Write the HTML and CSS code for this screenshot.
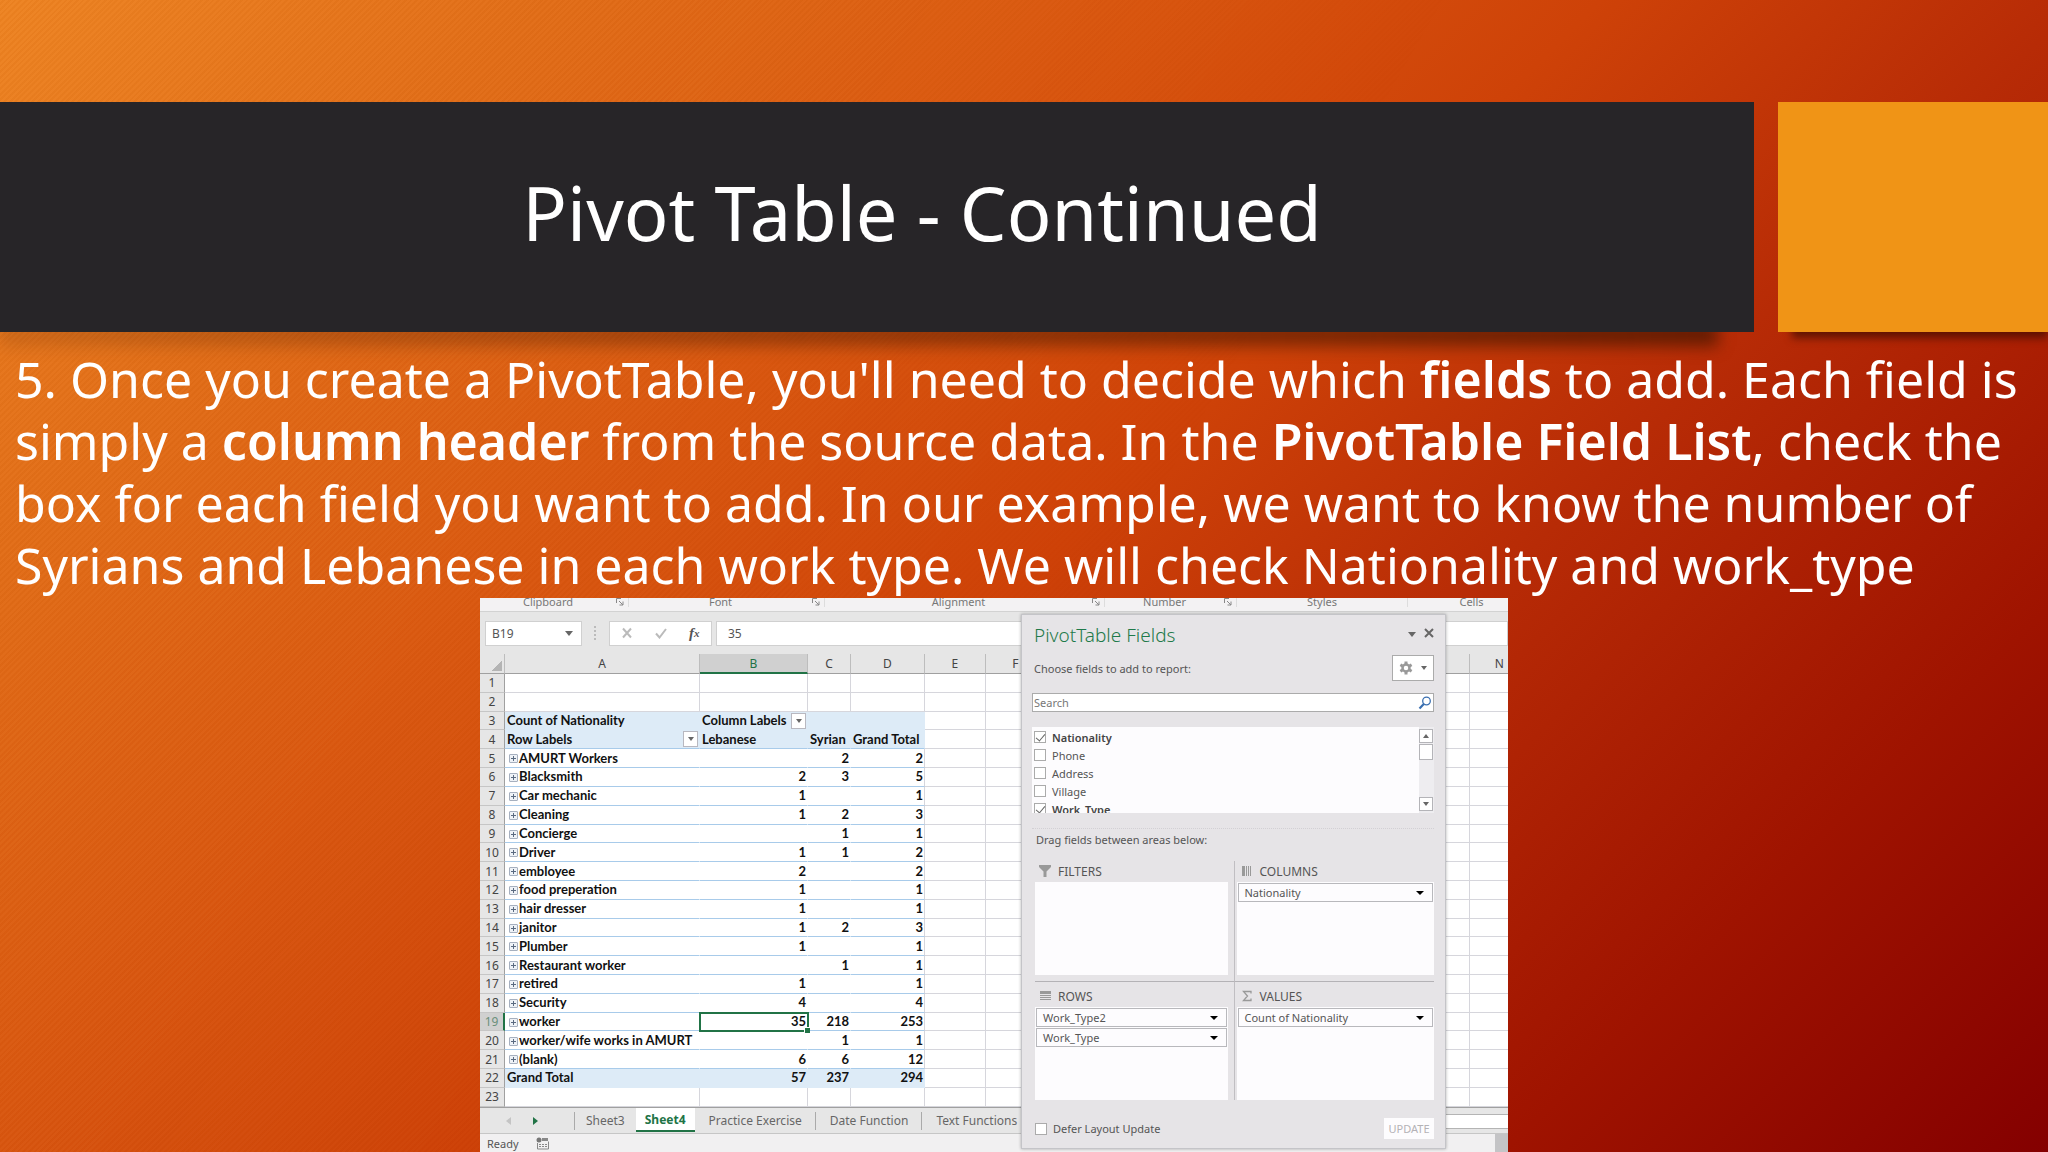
FILE: index.html
```html
<!DOCTYPE html>
<html lang="en">
<head>
    <meta charset="UTF-8">
    <title>Pivot Table - Continued</title>
    <link rel="stylesheet" href="styles.css">
</head>
<body>
<div class="slide">
    <header class="banner">
        <div class="banner-title"><h1>Pivot Table - Continued</h1></div>
        <div class="banner-accent"></div>
    </header>
    <p class="text">5. Once you create a PivotTable, you'll need to decide which <b>fields</b> to add. Each field is simply a <b>column header</b> from the source data. In the <b>PivotTable Field List</b>, check the box for each field you want to add. In our example, we want to know the number of Syrians and Lebanese in each work type. We will check Nationality and work_type</p>

    <div class="excel">
        <div class="ribbon">
            <div class="group"><span>Clipboard</span><svg class="launcher" viewBox="0 0 8 8"><path d="M.5 5V.5H5M3 3l4 4M7 3.500V7H3.500"/></svg></div>
            <div class="group"><span>Font</span><svg class="launcher" viewBox="0 0 8 8"><path d="M.5 5V.5H5M3 3l4 4M7 3.500V7H3.500"/></svg></div>
            <div class="group"><span>Alignment</span><svg class="launcher" viewBox="0 0 8 8"><path d="M.5 5V.5H5M3 3l4 4M7 3.500V7H3.500"/></svg></div>
            <div class="group"><span>Number</span><svg class="launcher" viewBox="0 0 8 8"><path d="M.5 5V.5H5M3 3l4 4M7 3.500V7H3.500"/></svg></div>
            <div class="group"><span>Styles</span></div>
            <div class="group"><span>Cells</span></div>
        </div>

        <div class="formula-bar">
            <div class="name-box">
                <input type="text" value="B19" aria-label="Name box">
                <button type="button" aria-label="Cell names"><i class="arrow"></i></button>
            </div>
            <svg class="grip" viewBox="0 0 3 14"><path d="M0 0h2v2H0zM0 4h2v2H0zM0 8h2v2H0zM0 12h2v2H0z"/></svg>
            <div class="fx">
                <button type="button" aria-label="Cancel"><svg viewBox="0 0 12 12"><path d="M2 1.500l8 9M10 1.500l-8 9"/></svg></button>
                <button type="button" aria-label="Enter"><svg viewBox="0 0 12 12"><path d="M1 6.500l3.500 4L11 2"/></svg></button>
                <button type="button" class="fn" aria-label="Insert function">f<sub>x</sub></button>
            </div>
            <input class="formula" type="text" value="35" aria-label="Formula">
        </div>

        <table class="sheet">
            <colgroup>
                <col class="c-num"><col class="c-a"><col class="c-b"><col class="c-c"><col class="c-d">
                <col span="10">
            </colgroup>
            <thead><tr id="letters"></tr></thead>
            <tbody id="rows"></tbody>
        </table>

        <div class="tabs">
            <div class="tabs-nav">
                <button type="button" aria-label="Previous sheet"><i class="prev"></i></button>
                <button type="button" aria-label="Next sheet"><i class="next"></i></button>
            </div>
            <button type="button" class="tab">Sheet3</button>
            <button type="button" class="tab current">Sheet4</button>
            <button type="button" class="tab">Practice Exercise</button>
            <button type="button" class="tab">Date Function</button>
            <button type="button" class="tab">Text Functions</button>
            <div class="hscroll"></div>
        </div>
        <div class="status">
            <span>Ready</span>
            <svg viewBox="0 0 13 13"><circle cx="3" cy="3" r="2.500" fill="#777"/><path d="M6 1h6v3H6z" fill="#888"/><path d="M1.500 6v6h11V4.500" fill="none" stroke="#888"/><path d="M3 7h2v1H3zM6 7h2v1H6zM9 7h2v1H9zM3 9h2v1H3zM6 9h2v1H6zM9 9h2v1H9z" fill="#888"/></svg>
            <div class="status-end"></div>
        </div>

        <aside class="panel">
            <div class="panel-head">
                <h2>PivotTable Fields</h2>
                <button type="button" aria-label="Task pane options"><i class="arrow big"></i></button>
                <button type="button" aria-label="Close"><svg viewBox="0 0 10 10"><path d="M1 1l8 8M9 1L1 9"/></svg></button>
            </div>
            <div class="choose">
                <span>Choose fields to add to report:</span>
                <button type="button" aria-label="Tools">
                    <svg viewBox="0 0 14 14"><circle cx="7" cy="7" r="3.500" fill="none" stroke="#999" stroke-width="2.500"/><path d="M7 .5v2.500M7 11v2.500M1.400 3.800l2.100 1.200M10.500 9l2.100 1.200M1.400 10.200L3.500 9M10.500 5l2.100-1.200" stroke="#999" stroke-width="3"/></svg>
                    <i class="arrow"></i>
                </button>
            </div>
            <div class="search">
                <input type="text" placeholder="Search" aria-label="Search">
                <svg viewBox="0 0 14 14"><circle cx="8.500" cy="5" r="3.800"/><path d="M5.800 8L1.500 12.500" stroke-width="2.200"/></svg>
            </div>
            <div class="fields">
                <div class="fields-list">
                    <label class="on"><input type="checkbox" checked>Nationality</label>
                    <label><input type="checkbox">Phone</label>
                    <label><input type="checkbox">Address</label>
                    <label><input type="checkbox">Village</label>
                    <label class="on"><input type="checkbox" checked>Work_Type</label>
                </div>
                <div class="vscroll">
                    <button type="button" aria-label="Scroll up"><i class="arrow up"></i></button>
                    <div class="thumb"></div>
                    <button type="button" class="down" aria-label="Scroll down"><i class="arrow"></i></button>
                </div>
            </div>
            <p class="drag">Drag fields between areas below:</p>
            <div class="areas">
                <section class="area">
                    <h3><svg viewBox="0 0 12 12"><path d="M0 0h12v2L7.500 6.500V12h-3V6.500L0 2z"/></svg>FILTERS</h3>
                    <div class="drop"></div>
                </section>
                <section class="area">
                    <h3><svg viewBox="0 0 12 12"><path d="M1 1h3v10H1zM5 1h1v10H5zM7 1h1v10H7zM9 1h1v10H9z"/></svg>COLUMNS</h3>
                    <div class="drop">
                        <button type="button">Nationality<i class="arrow black"></i></button>
                    </div>
                </section>
                <section class="area">
                    <h3><svg viewBox="0 0 12 12"><path d="M1 1h11v3H1zM1 5h11v1H1zM1 7h11v1H1zM1 9h11v1H1z"/></svg>ROWS</h3>
                    <div class="drop">
                        <button type="button">Work_Type2<i class="arrow black"></i></button>
                        <button type="button">Work_Type<i class="arrow black"></i></button>
                    </div>
                </section>
                <section class="area">
                    <h3><svg viewBox="0 0 12 12"><path d="M10 3.500V1.500H2.500L6.500 6l-4 4.500H10v-2" fill="none" stroke="#999" stroke-width="1.300"/></svg>VALUES</h3>
                    <div class="drop">
                        <button type="button">Count of Nationality<i class="arrow black"></i></button>
                    </div>
                </section>
            </div>
            <div class="panel-foot">
                <label><input type="checkbox">Defer Layout Update</label>
                <button type="button" disabled>UPDATE</button>
            </div>
        </aside>
    </div>
</div>
<script src="script.js"></script>
</body>
</html>
```
FILE: styles.css
```css
*{margin: 0; padding: 0; box-sizing: border-box;}
body {
    font-family: "Noto Sans", "Open Sans", sans-serif;
    color: #fff;
}
button, input {
    font: inherit;
    color: inherit;
    border: 0;
    border-radius: 0;
    background: none;
}
svg {display: block;}

/* slide */
.slide {
    position: relative;
    z-index: 0;
    height: 100vh;
    padding-top: 102px;
    overflow: hidden;
    background: linear-gradient(135deg, #ee8422 0%, #e26d17 18%, #da5810 34%, #ce4208 50%, #b72b06 65%, #9f1300 83%, #840000 100%);
}
.slide::before {
    content: "";
    position: absolute;
    inset: 0;
    z-index: -2;
    background: repeating-linear-gradient(135deg, rgba(255,255,255,.02) 0 2px, rgba(120,40,0,.03) 2px 4px);
    -webkit-mask-image: linear-gradient(120deg, #000 25%, transparent 55%);
    mask-image: linear-gradient(120deg, #000 25%, transparent 55%);
}
.banner {
    display: grid;
    grid-template-columns: 1754fr 270fr;
    column-gap: 24px;
    min-height: 230px;
}
.banner-title, .banner-accent {position: relative;}
.banner-title {
    display: flex;
    align-items: center;
    justify-content: center;
    padding: 0 0 8px 90px;
    background: #272528;
}
.banner-accent {background: #f09416;}
/* shadows under the two blocks */
.banner-title::after, .banner-accent::after {
    content: "";
    position: absolute;
    z-index: -1;
    left: 0;
    right: 36px;
    bottom: -14px;
    height: 24px;
    background: linear-gradient(90deg, rgba(60,20,0,.15), rgba(60,20,0,.7));
    filter: blur(8px);
}
.banner-accent::after {
    left: 14px;
    right: 0;
    bottom: -6px;
    background: rgba(60,10,0,.7);
    filter: blur(4px);
}
h1 {
    font-size: 74px;
    font-weight: 400;
    line-height: 1;
}
.text {
    padding: 16px 0 2px 15px;
    font-size: 50px;
    line-height: 62px;
}
.text b {font-weight: 600;}

/* excel window */
.excel {
    position: relative;
    margin: 0 540px 0 480px;
    overflow: hidden;
    background: #e6e6e6;
    color: #555;
    font-size: 12px;
}
.ribbon {
    display: grid;
    grid-template-columns: 149px 196px 280px 132px 171px 128px;
    height: 14px;
    background: #f3f2f3;
    border-bottom: 1px solid #d2d2d2;
    font-size: 11px;
    line-height: 8px;
    color: #777;
}
.group {
    display: flex;
    border-right: 1px solid #ddd;
    height: 9px;
}
.group span {
    flex: 1;
    text-align: center;
}
.launcher {
    width: 8px;
    height: 8px;
    margin-right: 4px;
    fill: none;
    stroke: #888;
}
.arrow {
    display: inline-block;
    border: 3px solid transparent;
    border-top: 4px solid #666;
    border-bottom: 0;
}
.arrow.big {border-width: 5px 4px 0;}
.arrow.black {border-top-color: #000; border-width: 4px 4px 0;}
.arrow.up {transform: rotate(180deg);}
.formula-bar {
    display: flex;
    align-items: center;
    height: 42px;
    padding-left: 5px;
}
.name-box, .fx, .formula {
    height: 25px;
    background: #fff;
    border: 1px solid #d0d0d0;
}
.name-box {
    display: flex;
    width: 97px;
}
.name-box input {
    width: 70px;
    padding-left: 6px;
}
.name-box button {
    flex: 1;
    display: flex;
    align-items: center;
    justify-content: center;
}
.name-box .arrow {border-width: 5px 4px 0;}
.grip {
    width: 3px;
    height: 14px;
    margin: 0 12px;
    fill: #bbb;
}
.fx {
    display: flex;
    width: 103px;
}
.fx button {
    flex: 1;
    display: flex;
    align-items: center;
    justify-content: center;
}
.fx svg {
    width: 12px;
    height: 12px;
    fill: none;
    stroke: #bbb;
    stroke-width: 2;
}
.fx .fn {
    font: italic bold 15px/15px "Liberation Serif", serif;
    color: #555;
}
.fn sub {font-size: 11px;}
.formula {
    flex: 1;
    margin-left: 4px;
    padding-left: 11px;
}

/* sheet */
.sheet {
    width: 1050px;
    height: 453px;
    table-layout: fixed;
    border-collapse: separate;
    border-spacing: 0;
    background: #fff;
    font-size: 13px;
    line-height: 17px;
    color: #111;
}
.c-num {width: 25px;}
.c-a {width: 195px;}
.c-b {width: 108px;}
.c-c {width: 43px;}
.c-d {width: 74px;}
.sheet th {
    background: #e6e6e6;
    border-right: 1px solid #bdbdbd;
    border-bottom: 1px solid #a0a0a0;
    font-weight: 400;
    font-size: 12px;
    color: #444;
}
.sheet thead th {height: 20px;}
.sheet tbody th {
    border-right-color: #a0a0a0;
    border-bottom-color: #c6c6c6;
}
.sheet thead th.active {
    background: #d0d0d0;
    border-bottom: 2px solid #217346;
    color: #217346;
}
.sheet tbody th.active {
    background: #d0d0d0;
    border-right: 2px solid #217346;
    color: #6a8f7b;
}
.corner i {
    display: block;
    margin: 4px 2px 0 auto;
    width: 10px;
    height: 10px;
    background: linear-gradient(135deg, transparent 50%, #b4b4b4 50%);
}
.sheet td {
    border-right: 1px solid #d6d6dc;
    border-bottom: 1px solid #d6d6dc;
    white-space: nowrap;
}
.sheet .pv {
    padding: 0 2px;
    border-right-color: transparent;
    border-bottom-color: #a8cbea;
    font-family: Lato, sans-serif;
    font-weight: 700;
}
.sheet .pv.last {border-right-color: #d6d6dc;}
.sheet .pv.num {text-align: right; padding-right: 1px;}
.sheet .blue {
    background: #ddebf7;
    border-color: #ddebf7;
}
.sheet .blue.line {border-bottom-color: #a8cbea;}
.cell {
    display: flex;
    align-items: center;
    justify-content: space-between;
}
.filter {
    display: flex;
    align-items: center;
    justify-content: center;
    width: 15px;
    height: 16px;
    margin-right: -1px;
    background: #fff;
    border: 1px solid #b8b8c0;
}
.plus {
    display: inline-block;
    width: 9px;
    height: 9px;
    margin: 0 1px 1px 2px;
    vertical-align: middle;
    border: 1px solid #a6b0bf;
    border-radius: 1px;
    background:
        linear-gradient(#5a6a80, #5a6a80) center / 5px 1px no-repeat,
        linear-gradient(#5a6a80, #5a6a80) center / 1px 5px no-repeat,
        #eef2f7;
}
.sheet .selected {
    position: relative;
    outline: 2px solid #217346;
    outline-offset: -1px;
}
.selected::after {
    content: "";
    position: absolute;
    right: -3px;
    bottom: -3px;
    width: 5px;
    height: 5px;
    background: #217346;
    border: solid #fff;
    border-width: 1px 0 0 1px;
}

/* sheet tabs */
.tabs {
    display: flex;
    height: 27px;
    border-top: 1px solid #a0a0a0;
    border-bottom: 1px solid #c6c6c6;
    white-space: nowrap;
}
.tabs-nav {
    display: flex;
    align-items: center;
    gap: 22px;
    width: 95px;
    padding-left: 26px;
}
.tabs-nav i {
    display: block;
    border: 4px solid transparent;
}
.tabs-nav .prev {border-right: 5px solid #c4c4c4; border-left: 0;}
.tabs-nav .next {border-left: 5px solid #217346; border-right: 0;}
.tab {
    position: relative;
    height: 24px;
    padding: 0 14px;
    color: #666;
}
.tab::after, .tabs-nav + .tab::before {
    content: "";
    position: absolute;
    top: 4px;
    right: 0;
    height: 18px;
    border-right: 1px solid #aaa;
}
.tabs-nav + .tab {padding: 0 11px;}
.tabs-nav + .tab::before {right: 100%;}
.tabs-nav + .tab::after, .tab.current::after {display: none;}
.tab.current {
    background: #fff;
    border-bottom: 2px solid #217346;
    font-weight: 700;
    padding: 0 9px;
    color: #217346;
}
.hscroll {
    flex: 1;
    height: 15px;
    margin: 6px 0 0 20px;
    background: #fff;
    border: 1px solid #b4b4b4;
    border-right: 0;
}
.status {
    display: flex;
    align-items: center;
    gap: 17px;
    height: 18px;
    padding-left: 7px;
    background: #f1f0f1;
    font-size: 11px;
}
.status svg {width: 13px; height: 13px;}
.status-end {
    width: 13px;
    height: 18px;
    margin-left: auto;
    background: #c4c4c6;
}

/* field list panel, floats over the sheet */
.panel {
    position: absolute;
    top: 16px;
    left: 541px;
    width: 425px;
    padding: 0 11px 9px 10px;
    background: #e6e4e7;
    border: 1px solid #c4c4c8;
    box-shadow: 0 0 3px rgba(0,0,0,.3);
    font-size: 11px;
    color: #555;
}
.panel-head {
    display: flex;
    align-items: center;
    gap: 8px;
    height: 40px;
    padding-left: 2px;
}
.panel-head h2 {
    flex: 1;
    font-size: 19px;
    font-weight: 300;
    color: #1f7a4a;
}
.panel-head button {line-height: 8px; margin-bottom: 4px;}
.panel-head svg {
    width: 10px;
    height: 10px;
    stroke: #666;
    stroke-width: 2;
}
.choose {
    display: flex;
    align-items: center;
    justify-content: space-between;
    padding-left: 2px;
}
.choose button {
    display: flex;
    align-items: center;
    justify-content: center;
    gap: 8px;
    width: 42px;
    height: 26px;
    background: #fff;
    border: 1px solid #ababab;
}
.choose svg {width: 14px; height: 14px;}
.search {
    display: flex;
    align-items: center;
    height: 19px;
    margin: 12px 0 15px;
    padding-right: 1px;
    background: #fff;
    border: 1px solid #ababab;
}
.search input {
    flex: 1;
    height: 17px;
    padding: 0 1px;
    outline: 0;
}
.search input::placeholder {color: #777;}
.search svg {
    width: 14px;
    height: 14px;
    fill: none;
    stroke: #3a6fb0;
    stroke-width: 1.3;
}
.fields {
    display: flex;
    height: 86px;
    margin-bottom: 15px;
    overflow: hidden;
    background: #fdfcfe;
}
.fields-list {
    flex: 1;
    padding: 1px 0 0 2px;
}
.fields label {
    display: flex;
    align-items: center;
    gap: 6px;
    height: 18px;
}
.fields .on {font-weight: 600; color: #444;}
input[type=checkbox] {
    appearance: none;
    width: 12px;
    height: 12px;
    background: #fff;
    border: 1px solid #ababab;
}
input[type=checkbox]:checked::before {
    content: "";
    display: block;
    width: 4px;
    height: 8px;
    margin: 0 0 0 3px;
    border: solid #666;
    border-width: 0 1px 1px 0;
    transform: rotate(40deg);
}
.vscroll {
    display: flex;
    flex-direction: column;
    gap: 1px;
    width: 15px;
    padding: 2px 1px 2px 0;
    background: #eeedf0;
}
.vscroll button, .thumb {
    display: flex;
    align-items: center;
    justify-content: center;
    height: 14px;
    background: #fff;
    border: 1px solid #b4b4b8;
}
.thumb {height: 16px;}
.vscroll .down {margin-top: auto;}
.drag {
    padding: 1px 0 11px 4px;
    border-top: 1px dotted #d2d0d4;
    line-height: 20px;
}
.areas {
    display: grid;
    grid-template-columns: 1fr 1fr;
    margin-left: 3px;
}
.area:nth-child(odd) {
    padding-right: 6px;
    border-right: 1px solid #c0bec2;
}
.area:nth-child(even) {padding-left: 2px;}
.area:nth-child(-n+2) {
    padding-bottom: 6px;
    border-bottom: 1px solid #b4b2b6;
}
.area:nth-child(n+3) {padding-top: 4px;}
.area h3 {
    display: flex;
    align-items: center;
    gap: 7px;
    height: 21px;
    padding: 0 0 1px 4px;
    font-size: 12px;
    font-weight: 400;
}
.area h3 svg {
    width: 12px;
    height: 12px;
    fill: #999;
}
.drop {
    display: flex;
    flex-direction: column;
    gap: 1px;
    height: 93px;
    padding: 1px;
    background: #fdfcfe;
}
.drop button {
    display: flex;
    align-items: center;
    justify-content: space-between;
    height: 19px;
    padding: 0 8px 0 6px;
    border: 1px solid #b8b8bc;
}
.panel-foot {
    display: flex;
    align-items: center;
    justify-content: space-between;
    margin: 18px 0 0 3px;
}
.panel-foot label {
    display: flex;
    align-items: center;
    gap: 6px;
}
.panel-foot button {
    width: 50px;
    height: 21px;
    background: #fdfcfe;
    color: #b4b2b6;
}
```
FILE: script.js
```js
var letters = ["A", "B", "C", "D", "E", "F", "G", "H", "I", "J", "K", "L", "M", "N"];
// label, Lebanese, Syrian, Grand Total
var data = [
    ["AMURT Workers", "", 2, 2],
    ["Blacksmith", 2, 3, 5],
    ["Car mechanic", 1, "", 1],
    ["Cleaning", 1, 2, 3],
    ["Concierge", "", 1, 1],
    ["Driver", 1, 1, 2],
    ["embloyee", 2, "", 2],
    ["food preperation", 1, "", 1],
    ["hair dresser", 1, "", 1],
    ["janitor", 1, 2, 3],
    ["Plumber", 1, "", 1],
    ["Restaurant worker", "", 1, 1],
    ["retired", 1, "", 1],
    ["Security", 4, "", 4],
    ["worker", 35, 218, 253],
    ["worker/wife works in AMURT", "", 1, 1],
    ["(blank)", 6, 6, 12]
];
var filter = '<button type="button" class="filter" aria-label="Filter"><i class="arrow"></i></button>';

function empty(n) {
    return new Array(n + 1).join("<td></td>");
}

var head = '<th class="corner"><i></i></th>';
for (var i = 0; i < letters.length; i++) {
    head += '<th' + (letters[i] == "B" ? ' class="active"' : '') + '>' + letters[i] + '</th>';
}
document.getElementById("letters").innerHTML = head;

var html = "";
for (var r = 1; r <= 23; r++) {
    html += '<tr><th' + (r == 19 ? ' class="active"' : '') + '>' + r + '</th>';
    if (r == 3) {
        html += '<td class="pv blue">Count of Nationality</td>' +
            '<td class="pv blue"><div class="cell">Column Labels' + filter + '</div></td>' +
            '<td class="pv blue"></td><td class="pv blue"></td>' + empty(10);
    } else if (r == 4) {
        html += '<td class="pv blue line"><div class="cell">Row Labels' + filter + '</div></td>' +
            '<td class="pv blue line">Lebanese</td><td class="pv blue line">Syrian</td>' +
            '<td class="pv blue line">Grand Total</td>' + empty(10);
    } else if (r >= 5 && r <= 21) {
        var d = data[r - 5];
        html += '<td class="pv"><button type="button" class="plus" aria-label="Expand"></button>' + d[0] + '</td>' +
            '<td class="pv num' + (r == 19 ? ' selected' : '') + '">' + d[1] + '</td>' +
            '<td class="pv num">' + d[2] + '</td><td class="pv num last">' + d[3] + '</td>' + empty(10);
    } else if (r == 22) {
        html += '<td class="pv blue">Grand Total</td><td class="pv blue num">57</td>' +
            '<td class="pv blue num">237</td><td class="pv blue num">294</td>' + empty(10);
    } else {
        html += empty(14);
    }
    html += '</tr>';
}
document.getElementById("rows").innerHTML = html;
```
